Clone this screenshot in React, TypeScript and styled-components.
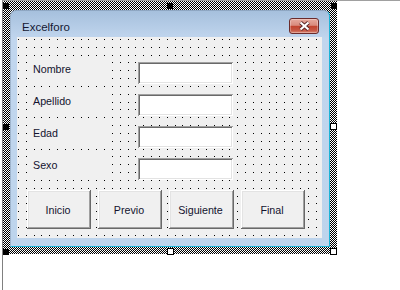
import React from 'react';
import styled, { createGlobalStyle } from 'styled-components';

const BG = '#f0f0f0';
// designer grid: a dot every ~7.8px, repeated in a 47px tile
const DOTS = [0, 8, 16, 23, 31, 39];
const TILE = 47;

const stops = (dot: string, gap: string) =>
  DOTS.map((p, i) => {
    const next = i + 1 < DOTS.length ? DOTS[i + 1] : TILE;
    return `${dot} ${p}px ${p + 1}px, ${gap} ${p + 1}px ${next}px`;
  }).join(', ');

const GlobalStyle = createGlobalStyle`
  body {
    margin: 0;
    background: #fff;
    font-family: "Liberation Sans", Arial, sans-serif;
  }
`;

const Editor = styled.div`
  height: 290px;
  box-sizing: border-box;
  margin-left: 2px;
  border-top: 1px solid #a0a0a0;
  border-left: 1px solid #808080;
`;

const Selection = styled.div`
  position: relative;
  width: 334px;
  height: 253px;
  box-sizing: border-box;
  padding: 9px 7px 7px 7px;
  background: repeating-conic-gradient(#000 0 25%, #fff 0 50%) 0 0 / 2px 2px;
`;

const Handle = styled.span<{ $x: number; $y: number; $open?: boolean }>`
  position: absolute;
  left: ${p => p.$x}px;
  top: ${p => p.$y}px;
  width: ${p => (p.$open ? 7 : 6)}px;
  height: ${p => (p.$open ? 7 : 6)}px;
  box-sizing: border-box;
  border: 1px solid #000;
  background: ${p => (p.$open ? '#fff' : '#000')};
`;

const Form = styled.div`
  height: 100%;
  display: flex;
  flex-direction: column;
  box-sizing: border-box;
  background: linear-gradient(#a6c0dd, #c1d6ee 28px, #bdd4ec);
  border-radius: 6px 6px 0 0;
  border-top: 1px solid #8ea6c2;
  border-left: 1px solid #9fb4cc;
  border-right: 1px solid #1bb3d6;
  border-bottom: 1px solid #1bb3d6;
`;

const TitleBar = styled.div`
  height: 26px;
  flex: none;
  display: flex;
  justify-content: space-between;
  align-items: flex-start;
  padding: 0 10px 0 11px;
`;

const Title = styled.span`
  padding-top: 9px;
  font-size: 11.5px;
  line-height: 14px;
  color: #141832;
`;

const CloseButton = styled.div`
  margin-top: 7px;
  width: 30px;
  height: 16px;
  box-sizing: border-box;
  display: flex;
  align-items: center;
  justify-content: center;
  border: 1px solid #6b2b2b;
  border-radius: 3px;
  background: linear-gradient(#e6aa9e 0%, #d98b7d 45%, #c2442f 52%, #c55643 80%, #d98672 100%);
  box-shadow: inset 0 0 0 1px rgba(255, 255, 255, 0.3);
`;

const Client = styled.div`
  flex: 1;
  margin: 0 7px 8px 6px;
  padding: 19px 0 0 10px;
  background-color: ${BG};
  background-image:
    linear-gradient(to right, ${stops('transparent', BG)}),
    linear-gradient(to bottom, ${stops('#000', BG)});
  background-size: ${TILE}px 100%, 100% ${TILE}px;
  background-position: 1px 0, 0 2px;
`;

const Fields = styled.div`
  display: flex;
  flex-direction: column;
  gap: 4px;
  padding-left: 3px;
`;

const Row = styled.div`
  display: flex;
  height: 28px;
`;

const Label = styled.div`
  width: 80px;
  box-sizing: border-box;
  padding: 6px 0 0 3px;
  background: ${BG};
  font-size: 10.7px;
  line-height: 14px;
  color: #12122e;
`;

const TextBox = styled.div`
  margin: 6px 0 0 28px;
  width: 95px;
  height: 22px;
  background: #fff;
  box-shadow: inset 1px 1px #a0a0a0, inset -1px -1px #fff, inset 2px 2px #696969,
    inset -2px -2px #e3e3e3;
`;

const Buttons = styled.div`
  display: flex;
  gap: 7px;
  margin-top: 10px;
`;

const Button = styled.div<{ $w?: number }>`
  width: ${p => p.$w ?? 64}px;
  height: 39px;
  display: flex;
  align-items: center;
  justify-content: center;
  padding-right: 2px;
  box-sizing: border-box;
  background: ${BG};
  box-shadow: inset -1px -1px #696969, inset 1px 1px #fff, inset -2px -2px #a0a0a0,
    inset 2px 2px #e3e3e3;
  font-size: 10.7px;
  color: #12122e;
`;

const fields = ['Nombre', 'Apellido', 'Edad', 'Sexo'];

export default function App() {
  return (
    <>
      <GlobalStyle />
      <Editor>
        <Selection>
          <Form>
            <TitleBar>
              <Title>Excelforo</Title>
              <CloseButton>
                <svg width="13" height="10" viewBox="0 0 13 10">
                  <path d="M2.5 1.5 L10.5 8.5 M10.5 1.5 L2.5 8.5" stroke="#5a2626" strokeWidth="4" />
                  <path d="M2.5 1.5 L10.5 8.5 M10.5 1.5 L2.5 8.5" stroke="#fff" strokeWidth="2.2" />
                </svg>
              </CloseButton>
            </TitleBar>
            <Client>
              <Fields>
                {fields.map(f => (
                  <Row key={f}>
                    <Label>{f}</Label>
                    <TextBox />
                  </Row>
                ))}
              </Fields>
              <Buttons>
                <Button>Inicio</Button>
                <Button>Previo</Button>
                <Button $w={65}>Siguiente</Button>
                <Button>Final</Button>
              </Buttons>
            </Client>
          </Form>
          <Handle $x={0} $y={2} />
          <Handle $x={164} $y={2} />
          <Handle $x={328} $y={2} />
          <Handle $x={0} $y={123} />
          <Handle $x={327} $y={122} $open />
          <Handle $x={0} $y={248} />
          <Handle $x={164} $y={247} $open />
          <Handle $x={327} $y={247} $open />
        </Selection>
      </Editor>
    </>
  );
}
